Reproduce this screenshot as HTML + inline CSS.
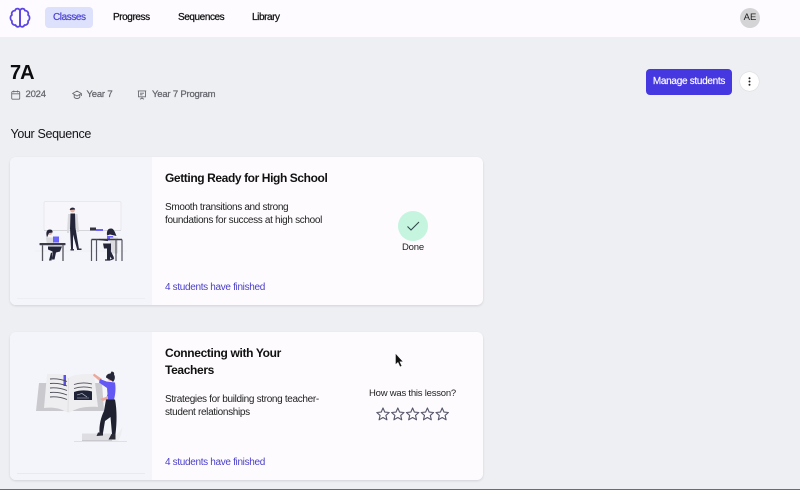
<!DOCTYPE html>
<html><head><meta charset="utf-8"><style>
*{box-sizing:border-box}
html,body{margin:0;padding:0}
body{width:800px;height:490px;overflow:hidden;background:#edeff2;position:relative;font-family:"Liberation Sans",sans-serif;color:#111}
.a{position:absolute;white-space:nowrap}
.m{-webkit-text-stroke:.25px currentColor}
svg{position:absolute;overflow:visible}
.card{position:absolute;left:10px;width:473px;height:148px;background:#fdfbfe;border-radius:6px;box-shadow:0 1px 2px rgba(40,50,70,.14);overflow:hidden}
.pan{position:absolute;left:0;top:0;width:142px;height:148px;background:#f4f5fa}
.nav{font-size:10px;line-height:12px;top:12px;letter-spacing:-.42px}
.t{font-size:12px;font-weight:bold;left:165px;line-height:17.5px;letter-spacing:-.4px}
.d{font-size:10px;left:165px;line-height:13px;color:#222;letter-spacing:-.33px}
.l{font-size:10px;left:165px;line-height:12px;color:#4a3fc8;letter-spacing:-.33px}
.meta{font-size:9.5px;line-height:12px;top:89px;color:#65666e;letter-spacing:-.2px}
</style></head><body>
<div class="a" style="left:0;top:0;width:800px;height:37px;background:#fdfbff"></div>
<svg style="left:9px;top:7px" width="22" height="22" viewBox="0 0 22 22" fill="none" stroke="#5b46e2" stroke-width="1.700" stroke-linecap="round" stroke-linejoin="round">
<path d="M11 3.500C10 1 6.500 1 6 3.700C3.500 3.500 2 6 3 8C1 9 .8 12.500 3 14C2.300 16.500 4.500 18.500 6.500 18C7.500 20.500 10.500 20.500 11 18Z"/>
<path d="M11 3.500C12 1 15.500 1 16 3.700C18.500 3.500 20 6 19 8C21 9 21.200 12.500 19 14C19.700 16.500 17.500 18.500 15.500 18C14.500 20.500 11.500 20.500 11 18Z"/>
<path d="M11 3.500V18" stroke-width="1.400"/>
</svg>
<div class="a" style="left:45px;top:7px;width:48px;height:21px;background:#dde1fb;border-radius:4px"></div>
<div class="a nav m" style="left:53px;color:#4f46d5">Classes</div>
<div class="a nav m" style="left:113px">Progress</div>
<div class="a nav m" style="left:178px">Sequences</div>
<div class="a nav m" style="left:252px">Library</div>
<div class="a" style="left:740px;top:8px;width:20px;height:20px;border-radius:50%;background:#d4d4d6;font-size:9.500px;line-height:20px;text-align:center;color:#222">AE</div>

<div class="a" style="left:10px;top:62px;font-size:20px;line-height:22px;font-weight:bold;color:#0c0c0e;letter-spacing:-1px">7A</div>
<svg style="left:11px;top:90px" width="10" height="10" viewBox="0 0 10 10" fill="none" stroke="#6a6b72" stroke-width=".9"><rect x=".7" y="1.600" width="8" height="7.600" rx="1"/><path d="M.7 3.800H8.700M2.800.5V2.400M6.600.5V2.400"/></svg>
<div class="a meta m" style="left:25.500px">2024</div>
<svg style="left:72px;top:90px" width="10" height="10" viewBox="0 0 10 10" fill="none" stroke="#6a6b72" stroke-width=".9" stroke-linejoin="round"><path d="M5 1 9.400 3.500 5 6 .6 3.500ZM2.200 4.500V7.200C3.500 9 6.500 9 7.800 7.200V4.500M9.400 3.500V6"/></svg>
<div class="a meta m" style="left:86.500px">Year 7</div>
<svg style="left:137px;top:90px" width="10" height="10" viewBox="0 0 10 10" fill="none" stroke="#6a6b72" stroke-width=".9"><path d="M.8.9H9.200M1.500.9V6.800H8.500V.9M5 6.800V8.200M3 9.200 5 8.200 7 9.200M3 3.200H7M3 4.800H5.500"/></svg>
<div class="a meta m" style="left:152px">Year 7 Program</div>

<div class="a" style="left:646px;top:69px;width:86px;height:26px;background:#4638e0;border-radius:4px;color:#fbfaff;font-size:10px;line-height:26px;text-align:center;letter-spacing:-.3px;-webkit-text-stroke:.2px #fbfaff">Manage students</div>
<div class="a" style="left:740px;top:72px;width:19px;height:19px;border-radius:50%;background:#fff;box-shadow:0 0 1px rgba(0,0,0,.25)"></div>
<svg style="left:740px;top:72px" width="19" height="19" viewBox="0 0 19 19" fill="#222"><circle cx="9.500" cy="6.200" r="1"/><circle cx="9.500" cy="9.500" r="1"/><circle cx="9.500" cy="12.800" r="1"/></svg>

<div class="a" style="left:10.500px;top:127px;font-size:12.500px;line-height:15px;color:#15151a;letter-spacing:-.35px">Your Sequence</div>

<div class="card" style="top:157px"><div class="pan"></div><div class="a" style="left:7px;top:141px;width:128px;height:1px;background:#eceef3"></div></div>
<div class="card" style="top:332px"><div class="pan"></div><div class="a" style="left:7px;top:141px;width:128px;height:1px;background:#e8eaef"></div></div>

<!-- classroom illustration -->
<svg style="left:30px;top:195px" width="100" height="70" viewBox="0 0 100 70">
<rect x="14" y="6.500" width="77" height="29" rx="1.500" fill="#f7f7fb" stroke="#e3e4e9" stroke-width=".7"/>
<path d="M14 35.500H91" stroke="#cfd0d6" stroke-width=".7"/>
<rect x="60" y="32.500" width="6" height="3" fill="#33333f"/><rect x="66" y="34" width="7" height="2" fill="#6c63ff"/>
<path d="M5 56H97" stroke="#eceef3" stroke-width=".7"/>
<!-- teacher -->
<circle cx="42.500" cy="15" r="2.400" fill="#e3b4a8"/><path d="M39.800 15C39.800 12 45 12 45.200 14.500Z" fill="#26263a"/>
<path d="M38 19H47.500L49 37H46.500V34H39.500L39 38H37Z" fill="#d9d9de"/>
<path d="M40.500 18.500H45L45.500 34H40Z" fill="#25253a"/>
<path d="M40 33H45.500L49 54H47L43 39.500L43 54H41Z" fill="#25253a"/>
<path d="M40.500 54H44V55.500H40.500ZM47 53.500H51.500V55H47Z" fill="#33333f"/>
<g transform="translate(0 4.500)">
<!-- left student -->
<circle cx="20" cy="33" r="2.400" fill="#e3b4a8"/><path d="M17 38C15.500 33 16.500 30 20 30C22 30 23 31.500 22.500 33L19 33.500Z" fill="#26263a"/>
<path d="M16 38H23L24 46H17Z" fill="#d9d9de"/><rect x="23" y="37" width="6" height="6" fill="#6c63ff"/>
<rect x="9.500" y="43.500" width="26" height="2.200" rx=".5" fill="#3a3a48"/>
<path d="M12.500 45.700V61.500M33 45.700V61.500" stroke="#55555f" stroke-width="1.300"/>
<path d="M18 47H32L30 52 26 53 24.500 60H22L22.500 52 18 50ZM21 53 19 61H21.500L23 54Z" fill="#25253a"/>
<!-- right student -->
<circle cx="80.500" cy="32" r="2.600" fill="#e3b4a8"/><path d="M77 36C76.500 31 78 29 81 29C84 29 85 33 86.500 36.500L80 35Z" fill="#26263a"/>
<path d="M77 36.500H83L84 41H77Z" fill="#6c63ff"/>
<path d="M80 38H88V54H80Z" fill="#dcdce0"/>
<path d="M61.500 40H92" stroke="#3a3a48" stroke-width="1.500"/>
<path d="M61.500 40V61.500M66.500 40V61.500M86 40V61.500M92 40V61.500" stroke="#55555f" stroke-width="1.200"/>
<path d="M69 40 78 41" stroke="#33333f" stroke-width="1.300"/>
<path d="M73 44H81V50L80 60H77V49H74ZM80 50 84 58 82 60 78 53Z" fill="#25253a"/>
<path d="M75 60.500H80M80 60.500 84 59" stroke="#25253a" stroke-width="1.200"/>
</g>
</svg>

<!-- book illustration -->
<svg style="left:30px;top:365px" width="100" height="80" viewBox="0 0 100 80">
<path d="M9 18H72L74 46H6Z" fill="#c9c9ce"/>
<path d="M17 9H30C34 9 37 11 38.500 13C42 10 50 9 56 9H64L68 42C56 41 46 43 39 48L36 47C30 43 22 42 14 43Z" fill="#eeeef1"/>
<path d="M38.500 13 38 47" stroke="#dcdce0" stroke-width=".8"/>
<rect x="33.500" y="10" width="2.500" height="11" fill="#5a50f0"/>
<g fill="none" stroke="#4a4a55" stroke-width=".9"><path d="M20 14C26 13.500 32 14.500 37 16.500M20 18.500C26 18 32 19 37 21M20 23C26 22.500 32 23.500 37 25.500M20 27.500C26 27 32 28 37 30M20 32C26 31.500 32 32.500 37 34.500"/><path d="M44 19.500C50 17.500 56 17.500 62 19M44 23.500C50 21.500 56 21.500 62 23"/></g>
<path d="M44 27C50 25 56 25 62 26.500V35H44Z" fill="#1f2338"/>
<path d="M47 30 52 28.500 57 32M47 33H59" stroke="#c8c8d8" stroke-width=".6" fill="none"/>
<!-- woman -->
<path d="M52 68.500H82V76H52Z" fill="#dedee2"/><path d="M52 75.500H82" stroke="#c8c8cd" stroke-width="1"/>
<path d="M82 72C86 70 90 67 92.500 62 92 68 90 73 88 76H82Z" fill="#eeeef1"/>
<path d="M44 76.500H97" stroke="#d8d8dd" stroke-width=".8"/>
<path d="M64 8.500 72 14 70 16.500 63 10.500Z" fill="#eba99c"/>
<circle cx="80.500" cy="13" r="3" fill="#eba99c"/><path d="M76 12.500C76 10 78 8.500 80.500 8.500L81.500 6.500C84 6.500 84.500 8.500 84 9.500C85.500 11.500 85 15 83 17 81.500 15 78 14 76 12.500Z" fill="#26263a"/>
<path d="M70 14 76.500 16.500 85 17.500C86 23 85.500 29 84 34.500H76L77.500 29 77 23 69 17.500Z" fill="#6458f5"/>
<path d="M70 34C74 32.500 76 32 78 31L78 34 73 36Z" fill="#eba99c"/>
<path d="M76 34.500H85C87 45 87 57 85.500 69H82L80.500 52 75 56 73 68H69.500C69 60 71 52 74 46Z" fill="#1f2030"/>
<path d="M68 67.500H73L73 70.500 66.500 71ZM81.500 69H85.500V74.500H78.500Z" fill="#2b2b38"/>
</svg>

<div class="a t" style="top:170px">Getting Ready for High School</div>
<div class="a d" style="top:201px">Smooth transitions and strong<br>foundations for success at high school</div>
<div class="a l" style="top:282px">4 students have finished</div>

<div class="a" style="left:398px;top:211px;width:30px;height:30px;border-radius:50%;background:#c5f5df"></div>
<svg style="left:398px;top:211px" width="30" height="30" viewBox="0 0 30 30" fill="none" stroke="#33474a" stroke-width="1.100"><path d="M9.500 15.500 13 19 21 11"/></svg>
<div class="a" style="left:398px;width:30px;top:241px;font-size:9.500px;line-height:13px;text-align:center;color:#222;letter-spacing:-.15px">Done</div>

<div class="a t" style="top:344.500px;letter-spacing:-.35px">Connecting with Your<br>Teachers</div>
<div class="a d" style="top:393px">Strategies for building strong teacher-<br>student relationships</div>
<div class="a l" style="top:457px">4 students have finished</div>

<div class="a" style="left:353px;width:119px;top:387px;font-size:9.500px;line-height:13px;text-align:center;color:#222;letter-spacing:-.22px">How was this lesson?</div>
<svg style="left:376px;top:407px" width="74" height="15" viewBox="0 0 74 15" fill="none" stroke="#55566a" stroke-width="1.100" stroke-linejoin="round">
<defs><path id="s" d="M7 1 8.800 5.100 13.200 5.500 9.900 8.400 10.900 12.800 7 10.500 3.100 12.800 4.100 8.400 .8 5.500 5.200 5.100Z"/></defs>
<use href="#s"/><use href="#s" x="14.800"/><use href="#s" x="29.600"/><use href="#s" x="44.400"/><use href="#s" x="59.200"/>
</svg>

<svg style="left:395px;top:353px" width="10" height="15" viewBox="0 0 10 15"><path d="M.5.5V11.500L3 9.300 5 13.800 6.800 13 4.800 8.700H8Z" fill="#111" stroke="#fff" stroke-width=".4"/></svg>

<div class="a" style="left:0;top:489px;width:800px;height:1px;background:#6a6d70"></div>
</body></html>
